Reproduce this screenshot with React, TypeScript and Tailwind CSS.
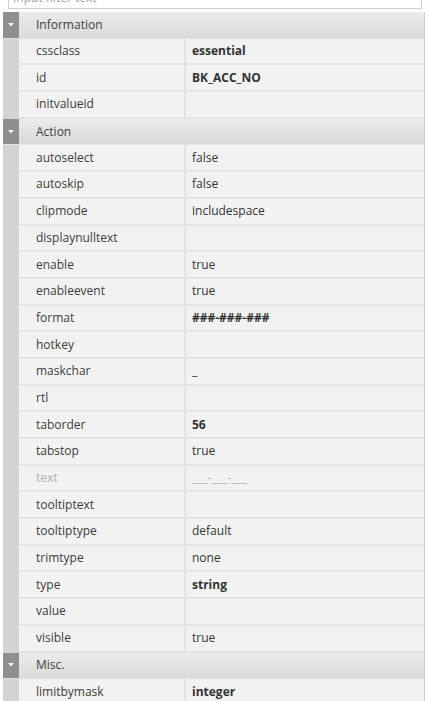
import React from 'react';

type Prop = { name: string; value?: string; bold?: boolean; disabled?: boolean };
type Group = { title: string; items: Prop[] };

const GROUPS: Group[] = [
  {
    title: 'Information',
    items: [
      { name: 'cssclass', value: 'essential', bold: true },
      { name: 'id', value: 'BK_ACC_NO', bold: true },
      { name: 'initvalueid' },
    ],
  },
  {
    title: 'Action',
    items: [
      { name: 'autoselect', value: 'false' },
      { name: 'autoskip', value: 'false' },
      { name: 'clipmode', value: 'includespace' },
      { name: 'displaynulltext' },
      { name: 'enable', value: 'true' },
      { name: 'enableevent', value: 'true' },
      { name: 'format', value: '###-###-###', bold: true },
      { name: 'hotkey' },
      { name: 'maskchar', value: '_' },
      { name: 'rtl' },
      { name: 'taborder', value: '56', bold: true },
      { name: 'tabstop', value: 'true' },
      { name: 'text', value: '___-___-___', disabled: true },
      { name: 'tooltiptext' },
      { name: 'tooltiptype', value: 'default' },
      { name: 'trimtype', value: 'none' },
      { name: 'type', value: 'string', bold: true },
      { name: 'value' },
      { name: 'visible', value: 'true' },
    ],
  },
  {
    title: 'Misc.',
    items: [{ name: 'limitbymask', value: 'integer', bold: true }],
  },
];

const GroupHeader: React.FC<{ title: string }> = ({ title }) => (
  <div className="flex h-[26.7px] bg-gradient-to-b from-[#ebebeb] to-[#d9d9d9] border-b border-[#e2e2e2]">
    <div className="w-[16px] shrink-0 bg-[#8f8f8f] flex items-center justify-center">
      <svg width="6" height="4" viewBox="0 0 6 4">
        <path d="M0 0 L6 0 L3 3.5 Z" fill="#f4f4f4" />
      </svg>
    </div>
    <div className="flex items-center pl-[17px] text-[12px] text-[#3f3f3f]">{title}</div>
  </div>
);

const PropRow: React.FC<{ p: Prop }> = ({ p }) => (
  <div className="flex h-[26.7px]">
    <div className="w-[16px] shrink-0 bg-[#d4d4d4]" />
    <div
      className={`w-[167px] shrink-0 flex items-center pl-[17px] border-b-2 border-r-2 border-[#e4e4e4] text-[12px] ${
        p.disabled ? 'text-[#b0b0b0]' : 'text-[#3c3c3c]'
      }`}
    >
      {p.name}
    </div>
    <div
      className={`flex-1 flex items-center pl-[6px] border-b-2 border-[#e4e4e4] text-[12px] ${
        p.disabled ? 'text-[#b4b4b4]' : 'text-[#333]'
      } ${p.bold ? 'font-bold' : ''}`}
    >
      {p.value}
    </div>
  </div>
);

export default function App() {
  return (
    <div className="w-[428px] h-[701px] overflow-hidden bg-white font-['Open_Sans','Noto_Sans',sans-serif]">
      {/* Filter */}
      <div className="px-[8px] pr-[6px]">
        <div className="h-[22px] mt-[-13px] border border-[#cfcfcf] bg-white flex items-center pl-[4px] text-[12px] text-[#a0a0a0]">
          Input filter text
        </div>
      </div>

      {/* Grid */}
      <div className="mt-[3px] mx-[3px] border-r border-[#cccccc] bg-[#f2f2f2]">
        {GROUPS.map((g) => (
          <div key={g.title}>
            <GroupHeader title={g.title} />
            {g.items.map((p) => (
              <PropRow key={p.name} p={p} />
            ))}
          </div>
        ))}
      </div>
    </div>
  );
}
